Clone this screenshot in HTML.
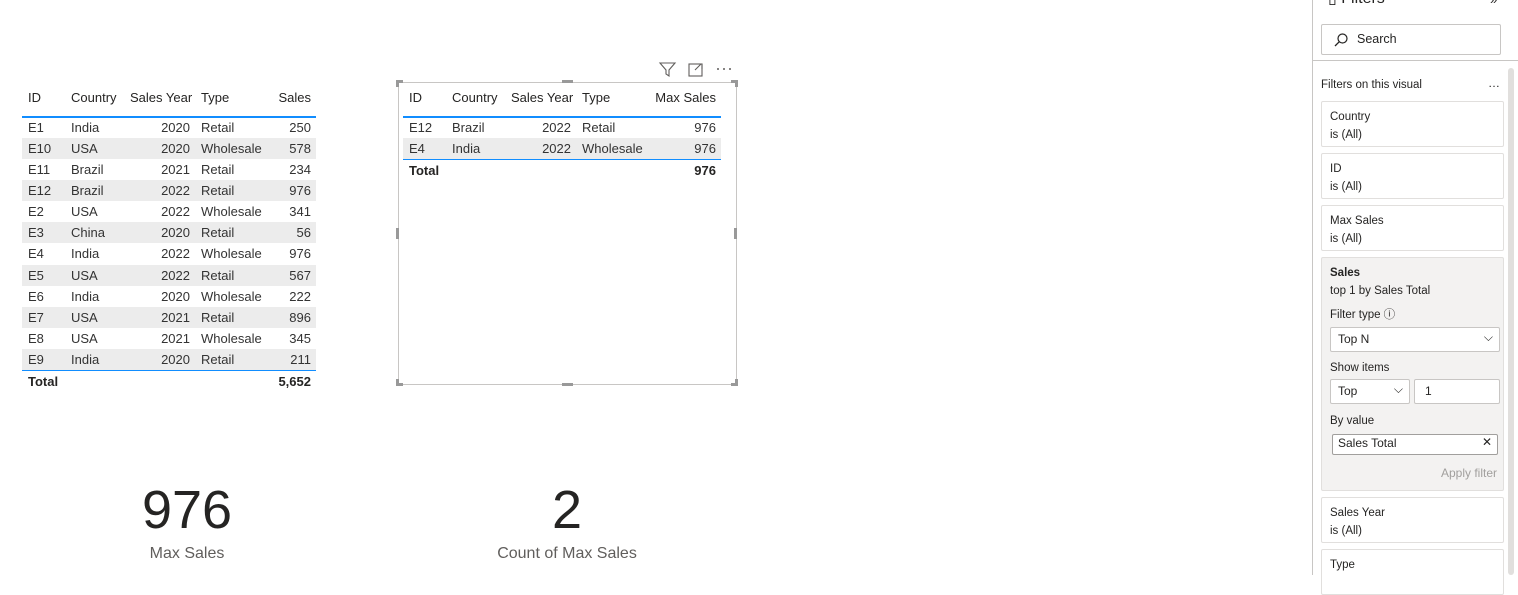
<!DOCTYPE html>
<html><head><meta charset="utf-8"><style>
*{box-sizing:border-box;margin:0;padding:0}
body{width:1518px;height:575px;overflow:hidden;background:#fff;font-family:"Segoe UI","Liberation Sans",sans-serif;color:#252423;position:relative;font-size:13px}
.a{position:absolute;white-space:nowrap}
.row{position:absolute;height:21.08px;line-height:21px;font-size:13px;color:#333}
.row span{position:absolute;top:0}
.g{background:#ececec}
.r{text-align:right}
.hd{color:#252423}
.card{position:absolute;background:#fff;border:1px solid #e1dfdd;border-radius:2px;width:183px;left:1321px;padding:6px 8px;font-size:11.5px;line-height:18px;color:#252423}
.inp{position:absolute;background:#fff;border:1px solid #c8c6c4;border-radius:2px;font-size:12px;color:#252423}
</style></head><body>

<!-- Left table -->
<div class="row hd" style="left:22px;top:87px;width:294px"><span style="left:6px">ID</span><span style="left:49px">Country</span><span style="left:108px">Sales Year</span><span style="left:179px">Type</span><span style="right:5px">Sales</span></div>
<div class="a" style="left:22px;top:116px;width:294px;height:2px;background:#118dff"></div>
<div style="position:absolute;left:22px;top:117px;width:294px">
<div class="row" style="top:0;width:294px"><span style="left:6px">E1</span><span style="left:49px">India</span><span style="right:126px">2020</span><span style="left:179px">Retail</span><span style="right:5px">250</span></div>
<div class="row g" style="top:21.08px;width:294px"><span style="left:6px">E10</span><span style="left:49px">USA</span><span style="right:126px">2020</span><span style="left:179px">Wholesale</span><span style="right:5px">578</span></div>
<div class="row" style="top:42.16px;width:294px"><span style="left:6px">E11</span><span style="left:49px">Brazil</span><span style="right:126px">2021</span><span style="left:179px">Retail</span><span style="right:5px">234</span></div>
<div class="row g" style="top:63.24px;width:294px"><span style="left:6px">E12</span><span style="left:49px">Brazil</span><span style="right:126px">2022</span><span style="left:179px">Retail</span><span style="right:5px">976</span></div>
<div class="row" style="top:84.32px;width:294px"><span style="left:6px">E2</span><span style="left:49px">USA</span><span style="right:126px">2022</span><span style="left:179px">Wholesale</span><span style="right:5px">341</span></div>
<div class="row g" style="top:105.4px;width:294px"><span style="left:6px">E3</span><span style="left:49px">China</span><span style="right:126px">2020</span><span style="left:179px">Retail</span><span style="right:5px">56</span></div>
<div class="row" style="top:126.48px;width:294px"><span style="left:6px">E4</span><span style="left:49px">India</span><span style="right:126px">2022</span><span style="left:179px">Wholesale</span><span style="right:5px">976</span></div>
<div class="row g" style="top:147.56px;width:294px"><span style="left:6px">E5</span><span style="left:49px">USA</span><span style="right:126px">2022</span><span style="left:179px">Retail</span><span style="right:5px">567</span></div>
<div class="row" style="top:168.64px;width:294px"><span style="left:6px">E6</span><span style="left:49px">India</span><span style="right:126px">2020</span><span style="left:179px">Wholesale</span><span style="right:5px">222</span></div>
<div class="row g" style="top:189.72px;width:294px"><span style="left:6px">E7</span><span style="left:49px">USA</span><span style="right:126px">2021</span><span style="left:179px">Retail</span><span style="right:5px">896</span></div>
<div class="row" style="top:210.8px;width:294px"><span style="left:6px">E8</span><span style="left:49px">USA</span><span style="right:126px">2021</span><span style="left:179px">Wholesale</span><span style="right:5px">345</span></div>
<div class="row g" style="top:231.88px;width:294px"><span style="left:6px">E9</span><span style="left:49px">India</span><span style="right:126px">2020</span><span style="left:179px">Retail</span><span style="right:5px">211</span></div>
</div>
<div class="a" style="left:22px;top:370px;width:294px;height:1px;background:#118dff"></div>
<div class="row" style="left:22px;top:371px;width:294px;font-weight:bold;color:#252423"><span style="left:6px">Total</span><span style="right:5px">5,652</span></div>

<!-- Second visual -->
<div class="a" style="left:398px;top:82px;width:339px;height:303px;border:1px solid #c8c6c4"></div>
<div class="a" style="left:396px;top:80px;width:7px;height:7px;border-left:3px solid #999;border-top:3px solid #999"></div>
<div class="a" style="left:731px;top:80px;width:7px;height:7px;border-right:3px solid #999;border-top:3px solid #999"></div>
<div class="a" style="left:396px;top:379px;width:7px;height:7px;border-left:3px solid #999;border-bottom:3px solid #999"></div>
<div class="a" style="left:731px;top:379px;width:7px;height:7px;border-right:3px solid #999;border-bottom:3px solid #999"></div>
<div class="a" style="left:562px;top:80px;width:11px;height:3px;background:#999"></div>
<div class="a" style="left:562px;top:383px;width:11px;height:3px;background:#999"></div>
<div class="a" style="left:396px;top:228px;width:3px;height:11px;background:#999"></div>
<div class="a" style="left:734px;top:228px;width:3px;height:11px;background:#999"></div>
<svg class="a" style="left:658px;top:61px" width="80" height="18" viewBox="0 0 80 18">
<path d="M2 2h15l-6 7v6l-3-2v-4z" fill="none" stroke="#605e5c" stroke-width="1.1"/>
<rect x="31" y="3" width="13" height="12" fill="none" stroke="#605e5c" stroke-width="1.1"/>
<path d="M37 9l6-6M39 3h5v5" fill="none" stroke="#605e5c" stroke-width="1.1"/>
<circle cx="60" cy="8" r="1" fill="#605e5c"/><circle cx="66" cy="8" r="1" fill="#605e5c"/><circle cx="72" cy="8" r="1" fill="#605e5c"/>
</svg>
<div class="row hd" style="left:403px;top:87px;width:318px"><span style="left:6px">ID</span><span style="left:49px">Country</span><span style="left:108px">Sales Year</span><span style="left:179px">Type</span><span style="right:5px">Max Sales</span></div>
<div class="a" style="left:403px;top:116px;width:318px;height:2px;background:#118dff"></div>
<div class="row" style="left:403px;top:117px;width:318px"><span style="left:6px">E12</span><span style="left:49px">Brazil</span><span style="right:150px">2022</span><span style="left:179px">Retail</span><span style="right:5px">976</span></div>
<div class="row g" style="left:403px;top:138px;width:318px"><span style="left:6px">E4</span><span style="left:49px">India</span><span style="right:150px">2022</span><span style="left:179px">Wholesale</span><span style="right:5px">976</span></div>
<div class="a" style="left:403px;top:159px;width:318px;height:1px;background:#118dff"></div>
<div class="row" style="left:403px;top:160px;width:318px;font-weight:bold;color:#252423"><span style="left:6px">Total</span><span style="right:5px">976</span></div>

<!-- Cards -->
<div class="a" style="left:87px;top:474px;width:200px;text-align:center;font-size:54px;line-height:72px;color:#252423">976</div>
<div class="a" style="left:87px;top:543px;width:200px;text-align:center;font-size:16px;line-height:22px;color:#605e5c">Max Sales</div>
<div class="a" style="left:467px;top:474px;width:200px;text-align:center;font-size:54px;line-height:72px;color:#252423">2</div>
<div class="a" style="left:447px;top:543px;width:240px;text-align:center;font-size:16px;line-height:22px;color:#605e5c">Count of Max Sales</div>

<!-- Filter pane -->
<div class="a" style="left:1312px;top:0;width:206px;height:575px;background:#fff;border-left:1px solid #c8c6c4"></div>
<div class="a" style="left:1313px;top:60px;width:205px;height:1px;background:#c8c6c4"></div>
<div class="a" style="left:1508px;top:68px;width:6px;height:507px;background:#e1dfdd;border-radius:3px"></div>
<div class="a" style="left:1328px;top:-10px;font-size:16px;line-height:18px;color:#252423">▯ Filters</div>
<div class="a" style="left:1490px;top:-8px;font-size:13px;color:#252423">»</div>
<div class="inp" style="left:1321px;top:24px;width:180px;height:31px"></div>
<svg class="a" style="left:1333px;top:32px" width="16" height="16" viewBox="0 0 16 16"><circle cx="9.5" cy="6.5" r="4.5" fill="none" stroke="#252423" stroke-width="1.2"/><path d="M6.3 9.7L2 14" stroke="#252423" stroke-width="1.3"/></svg>
<div class="a" style="left:1357px;top:30px;font-size:12.5px;line-height:18px">Search</div>
<div class="a" style="left:1321px;top:76px;font-size:11.5px;line-height:18px">Filters on this visual</div>
<div class="a" style="left:1488px;top:74px;font-size:12px;line-height:18px">…</div>
<div class="card" style="top:101px;height:46px">Country<br>is (All)</div>
<div class="card" style="top:153px;height:46px">ID<br>is (All)</div>
<div class="card" style="top:205px;height:46px">Max Sales<br>is (All)</div>
<div class="card" style="top:257px;height:234px;background:#f3f2f1"><b>Sales</b><br>top 1 by Sales Total</div>
<div class="a" style="left:1330px;top:306px;font-size:11.5px;line-height:18px">Filter type ⓘ</div>
<div class="inp" style="left:1330px;top:327px;width:170px;height:25px;padding:4px 7px">Top N<span style="position:absolute;right:6px;top:2px">⌵</span></div>
<div class="a" style="left:1330px;top:359px;font-size:11.5px;line-height:18px">Show items</div>
<div class="inp" style="left:1330px;top:379px;width:80px;height:25px;padding:4px 7px">Top<span style="position:absolute;right:6px;top:2px">⌵</span></div>
<div class="inp" style="left:1414px;top:379px;width:86px;height:25px;padding:4px 10px">1</div>
<div class="a" style="left:1330px;top:412px;font-size:11.5px;line-height:18px">By value</div>
<div class="inp" style="left:1332px;top:434px;width:166px;height:21px;padding:1px 5px;border-color:#a19f9d">Sales Total<span style="position:absolute;right:5px;top:0">✕</span></div>
<div class="a" style="left:1441px;top:464px;font-size:12px;line-height:18px;color:#a19f9d">Apply filter</div>
<div class="card" style="top:497px;height:46px">Sales Year<br>is (All)</div>
<div class="card" style="top:549px;height:46px">Type</div>
</body></html>
